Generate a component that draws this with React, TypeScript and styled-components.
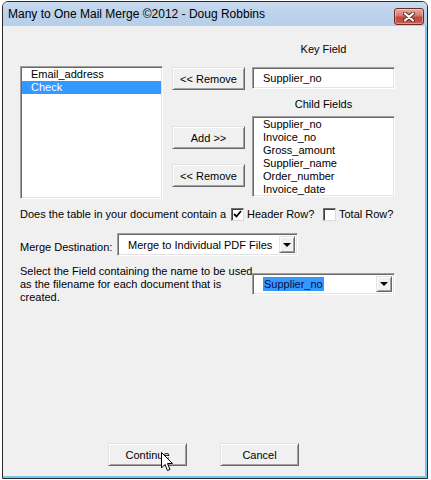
import styled, { createGlobalStyle } from "styled-components";

const GlobalStyle = createGlobalStyle`
  html, body {
    margin: 0;
    padding: 0;
    background: #ffffff;
  }
  * {
    box-sizing: border-box;
  }
`;

const Window = styled.div`
  position: relative;
  display: flex;
  flex-direction: column;
  width: 426px;
  height: 478px;
  margin: 1px 0 0 2px;
  border: 1px solid #2a2a2a;
  border-radius: 6px 6px 0 0;
  overflow: hidden;
  font-family: Tahoma, "Liberation Sans", Arial, sans-serif;
  font-size: 11px;
  color: #000;
`;

const TitleBar = styled.div`
  display: flex;
  align-items: center;
  height: 24px;
  padding: 0 2px 0 5px;
  background: linear-gradient(180deg, #cadbef 0%, #bcd2eb 45%, #b7cfea 100%);
`;

const Title = styled.span`
  flex: 1;
  font-family: "Liberation Sans", Arial, sans-serif;
  font-size: 12px;
  color: #000;
  white-space: nowrap;
`;

const CloseButton = styled.div`
  display: grid;
  place-items: center;
  width: 30px;
  height: 17px;
  margin: 5px 1px 0 0;
  border: 1px solid #6b2a22;
  border-radius: 3px;
  background: linear-gradient(180deg, #e6ada4 0%, #d27a6c 45%, #c0463a 55%, #c9604f 100%);
  box-shadow: inset 0 0 0 1px rgba(255, 255, 255, 0.35);
`;

const Client = styled.div`
  position: relative;
  flex: 1;
  display: flex;
  flex-direction: column;
  padding: 17px 0 10px 17px;
  background: #f0f0f0;
  border-right: 2px solid #78c6ee;
  border-bottom: 2px solid #78c6ee;
`;

const TopSection = styled.div`
  display: flex;
  align-items: flex-start;
`;

const Column = styled.div<{ $left: number; $top: number; $width: number }>`
  display: flex;
  flex-direction: column;
  width: ${(p) => p.$width}px;
  margin-left: ${(p) => p.$left}px;
  padding-top: ${(p) => p.$top}px;
`;

const Caption = styled.div<{ $top?: number }>`
  height: 13px;
  line-height: 13px;
  margin-top: ${(p) => p.$top ?? 0}px;
  text-align: center;
  white-space: nowrap;
`;

const Sunken = styled.div<{ $height: number; $top?: number }>`
  height: ${(p) => p.$height}px;
  margin-top: ${(p) => p.$top ?? 0}px;
  background: #ffffff;
  border: 1px solid;
  border-color: #a0a0a0 #ffffff #ffffff #a0a0a0;
  box-shadow: inset 1px 1px 0 #696969, inset -1px -1px 0 #e3e3e3;
  padding: 1px;
  overflow: hidden;
`;

const ListItem = styled.div<{ $selected?: boolean }>`
  height: 13px;
  line-height: 13px;
  padding-left: 9px;
  white-space: nowrap;
  background: ${(p) => (p.$selected ? "#3399ff" : "transparent")};
  color: ${(p) => (p.$selected ? "#ffffff" : "#000000")};
`;

const TextValue = styled.div`
  line-height: 18px;
  padding-left: 9px;
  white-space: nowrap;
`;

const Button = styled.div<{ $width: number; $height: number; $top?: number; $left?: number }>`
  display: grid;
  place-items: center;
  width: ${(p) => p.$width}px;
  height: ${(p) => p.$height}px;
  margin-top: ${(p) => p.$top ?? 0}px;
  margin-left: ${(p) => p.$left ?? 0}px;
  background: #f0f0f0;
  border: 1px solid;
  border-color: #e3e3e3 #696969 #696969 #e3e3e3;
  box-shadow: inset 1px 1px 0 #ffffff, inset -1px -1px 0 #a0a0a0;
  white-space: nowrap;
`;

const Row = styled.div<{ $top: number; $align?: string }>`
  display: flex;
  align-items: ${(p) => p.$align ?? "center"};
  margin-top: ${(p) => p.$top}px;
`;

const Label = styled.span<{ $width?: number; $pad?: number; $top?: number }>`
  display: block;
  width: ${(p) => (p.$width ? `${p.$width}px` : "auto")};
  line-height: 13px;
  padding-top: ${(p) => p.$top ?? 0}px;
  padding-bottom: ${(p) => p.$pad ?? 0}px;
  white-space: nowrap;
`;

const CheckBox = styled.div`
  display: grid;
  place-items: center;
  width: 13px;
  height: 13px;
  margin-right: 3px;
  background: #ffffff;
  border: 1px solid;
  border-color: #707070 #dcdcdc #dcdcdc #707070;
  box-shadow: inset 1px 1px 0 #404040;
`;

const Combo = styled.div<{ $width: number; $height: number; $top?: number; $left: number }>`
  display: flex;
  align-items: center;
  width: ${(p) => p.$width}px;
  height: ${(p) => p.$height}px;
  margin-top: ${(p) => p.$top ?? 0}px;
  margin-left: ${(p) => p.$left}px;
  padding: 2px;
  background: #ffffff;
  border: 1px solid;
  border-color: #a0a0a0 #ffffff #ffffff #a0a0a0;
  box-shadow: inset 1px 1px 0 #696969, inset -1px -1px 0 #e3e3e3;
`;

const ComboText = styled.div`
  flex: 1;
  padding-left: 8px;
  white-space: nowrap;
`;

const Highlight = styled.span`
  padding: 1px 1px;
  background: #3399ff;
  color: #0c0c48;
`;

const DropButton = styled.div`
  display: grid;
  place-items: center;
  width: 16px;
  align-self: stretch;
  background: #f0f0f0;
  border: 1px solid;
  border-color: #e3e3e3 #696969 #696969 #e3e3e3;
  box-shadow: inset 1px 1px 0 #ffffff, inset -1px -1px 0 #a0a0a0;
`;

const Arrow = styled.div`
  width: 0;
  height: 0;
  border-left: 4px solid transparent;
  border-right: 4px solid transparent;
  border-top: 4px solid #000;
`;

const ButtonBar = styled.div`
  display: flex;
  margin-top: auto;
  padding-left: 88px;
`;

const Cursor = styled.svg`
  position: absolute;
  left: 158px;
  top: 426px;
`;

const Check = () => (
  <svg width="9" height="9" viewBox="0 0 9 9">
    <path d="M1 4 L3.5 6.5 L8 1" fill="none" stroke="#000" strokeWidth="1.8" />
  </svg>
);

export default function App() {
  return (
    <>
      <GlobalStyle />
      <Window>
        <TitleBar>
          <Title>Many to One Mail Merge ©2012 - Doug Robbins</Title>
          <CloseButton>
            <svg width="12" height="10" viewBox="0 0 12 10">
              <path d="M2 1.5 L10 8.5 M10 1.5 L2 8.5" stroke="#5a2a25" strokeWidth="4" strokeLinecap="round" />
              <path d="M2 1.5 L10 8.5 M10 1.5 L2 8.5" stroke="#ffffff" strokeWidth="2.2" strokeLinecap="round" />
            </svg>
          </CloseButton>
        </TitleBar>
        <Client>
          <TopSection>
            <Column $left={0} $top={23} $width={143}>
              <Sunken $height={133}>
                <ListItem>Email_address</ListItem>
                <ListItem $selected>Check</ListItem>
              </Sunken>
            </Column>
            <Column $left={9} $top={24} $width={73}>
              <Button $width={73} $height={23}>&lt;&lt; Remove</Button>
              <Button $width={73} $height={23} $top={36}>Add &gt;&gt;</Button>
              <Button $width={73} $height={23} $top={15}>&lt;&lt; Remove</Button>
            </Column>
            <Column $left={7} $top={0} $width={143}>
              <Caption>Key Field</Caption>
              <Sunken $height={22} $top={11}>
                <TextValue>Supplier_no</TextValue>
              </Sunken>
              <Caption $top={9}>Child Fields</Caption>
              <Sunken $height={81} $top={5}>
                <ListItem>Supplier_no</ListItem>
                <ListItem>Invoice_no</ListItem>
                <ListItem>Gross_amount</ListItem>
                <ListItem>Supplier_name</ListItem>
                <ListItem>Order_number</ListItem>
                <ListItem>Invoice_date</ListItem>
              </Sunken>
            </Column>
          </TopSection>

          <Row $top={9}>
            <Label $width={211}>Does the table in your document contain a</Label>
            <CheckBox>
              <Check />
            </CheckBox>
            <Label $width={76}>Header Row?</Label>
            <CheckBox />
            <Label>Total Row?</Label>
          </Row>

          <Row $top={12} $align="flex-end">
            <Label $width={97} $pad={2}>Merge Destination:</Label>
            <Combo $width={181} $height={23} $left={0}>
              <ComboText>Merge to Individual PDF Files</ComboText>
              <DropButton>
                <Arrow />
              </DropButton>
            </Combo>
          </Row>

          <Row $top={8} $align="flex-start">
            <Label $width={232} $top={1}>
              Select the Field containing the name to be used
              <br />
              as the filename for each document that is
              <br />
              created.
            </Label>
            <Combo $width={143} $height={22} $top={9} $left={0}>
              <ComboText>
                <Highlight>Supplier_no</Highlight>
              </ComboText>
              <DropButton>
                <Arrow />
              </DropButton>
            </Combo>
          </Row>

          <ButtonBar>
            <Button $width={79} $height={23}>Continue</Button>
            <Button $width={79} $height={23} $left={33}>Cancel</Button>
          </ButtonBar>

          <Cursor width="13" height="20" viewBox="0 0 13 20">
            <path d="M0.5 0.5 L0.5 16 L4 12.5 L6.5 18.5 L9 17.5 L6.5 11.5 L11.5 11.5 Z" fill="#ffffff" stroke="#000000" strokeWidth="1" />
          </Cursor>
        </Client>
      </Window>
    </>
  );
}
